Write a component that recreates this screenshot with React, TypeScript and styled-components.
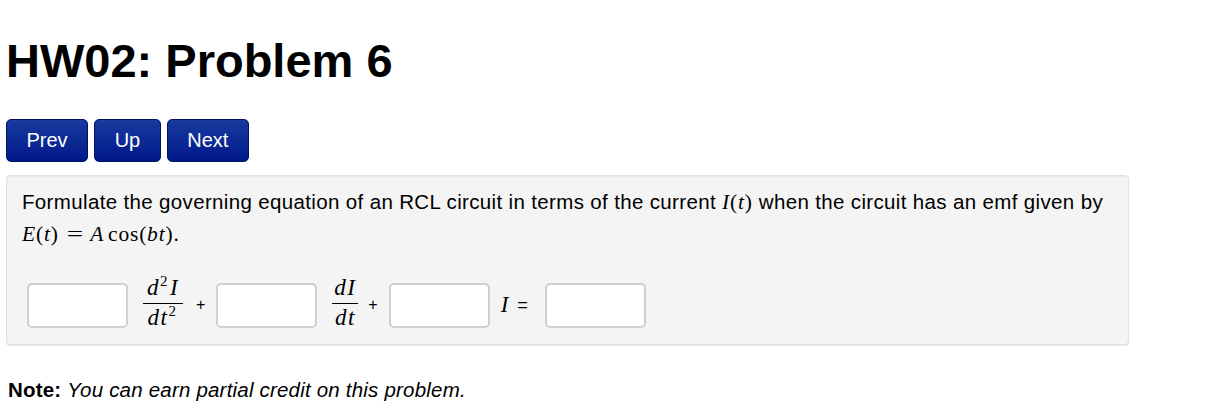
import React from 'react';
import styled, { createGlobalStyle } from 'styled-components';

const GlobalStyle = createGlobalStyle`
  body {
    margin: 0;
    background: #ffffff;
    font-family: "Liberation Sans", Arial, Helvetica, sans-serif;
    color: #000000;
  }
`;

const Page = styled.div`
  padding: 0 89px 0 6px;
`;

const Title = styled.h1`
  margin: 34px 0 0 0;
  font-size: 47px;
  font-weight: bold;
  line-height: 53px;
`;

const Nav = styled.div`
  display: flex;
  gap: 6px;
  margin-top: 32px;
`;

const NavButton = styled.button`
  height: 43px;
  padding: 0 19.5px;
  border: 1px solid #00135e;
  border-radius: 5px;
  background: linear-gradient(#193a9f, #00198a);
  color: #ffffff;
  font-family: "Liberation Sans", Arial, sans-serif;
  font-size: 20px;
  cursor: pointer;
`;

const Well = styled.div`
  margin-top: 13px;
  background: #f4f4f4;
  border: 1px solid #e2e2e2;
  border-radius: 4px;
  box-shadow: inset 0 1px 1px rgba(0, 0, 0, 0.05), 0 1px 0 #e6e6e6;
  padding: 10px 15px 9px 15px;
`;

const Text = styled.p`
  margin: 0;
  font-size: 20.5px;
  letter-spacing: 0.35px;
  line-height: 32px;
`;

const Mi = styled.span<{ $l?: number; $r?: number }>`
  font-family: "Liberation Serif", "Times New Roman", serif;
  font-size: 21.5px;
  font-style: italic;
  letter-spacing: 0.8px;
  margin: 0 ${({ $r = 0 }) => $r}px 0 ${({ $l = 0 }) => $l}px;
`;

const Mo = styled.span<{ $l?: number; $r?: number }>`
  font-family: "Liberation Serif", "Times New Roman", serif;
  font-size: 21.5px;
  font-style: normal;
  letter-spacing: 0.8px;
  margin: 0 ${({ $r = 0 }) => $r}px 0 ${({ $l = 0 }) => $l}px;
`;

const Eq = styled.span`
  display: inline-block;
  font-family: "Liberation Serif", "Times New Roman", serif;
  font-size: 21.5px;
  transform: scaleX(1.35);
  margin: 0 9px 0 10px;
`;

const Row = styled.div`
  display: flex;
  align-items: center;
  height: 60px;
  margin-top: 25px;
  padding-left: 5px;
`;

const Blank = styled.input<{ $l?: number }>`
  box-sizing: border-box;
  width: 101px;
  height: 45px;
  margin-left: ${({ $l = 0 }) => $l}px;
  border: 2px solid #cfcfcf;
  border-radius: 5px;
  background: #ffffff;
  outline: none;
`;

const Frac = styled.span<{ $w: number }>`
  display: inline-flex;
  flex-direction: column;
  align-items: stretch;
  width: ${({ $w }) => $w}px;
  margin: 0 0 5px 15px;
  font-family: "Liberation Serif", "Times New Roman", serif;
  font-style: italic;
  font-size: 23px;
  line-height: 26px;
  text-align: center;
`;

const Num = styled.span`
  display: block;
  padding-bottom: 2px;
  border-bottom: 1.5px solid #000;
  letter-spacing: 1.5px;
`;

const Den = styled.span`
  display: block;
  padding-top: 1px;
  letter-spacing: 1.5px;
`;

const Sup = styled.sup`
  font-style: normal;
  font-size: 15px;
  line-height: 0;
  vertical-align: 9px;
  margin-right: 1px;
`;

const Op = styled.span<{ $l: number; $size?: number }>`
  margin-left: ${({ $l }) => $l}px;
  font-size: ${({ $size = 16 }) => $size}px;
`;

const RowVar = styled.span`
  margin-left: 11px;
  font-family: "Liberation Serif", "Times New Roman", serif;
  font-style: italic;
  font-size: 23px;
`;

const Note = styled.p`
  margin: 33px 0 0 2px;
  font-size: 20.5px;
  letter-spacing: 0.2px;
`;

export default function App() {
  return (
    <Page>
      <GlobalStyle />
      <Title>HW02: Problem 6</Title>
      <Nav>
        <NavButton>Prev</NavButton>
        <NavButton>Up</NavButton>
        <NavButton>Next</NavButton>
      </Nav>
      <Well>
        <Text>
          Formulate the governing equation of an RCL circuit in terms of the current{' '}
          <Mi>I</Mi>
          <Mo>(</Mo>
          <Mi>t</Mi>
          <Mo>)</Mo> when the circuit has an emf given by
          <br />
          <Mi>E</Mi>
          <Mo>(</Mo>
          <Mi>t</Mi>
          <Mo>)</Mo>
          <Eq>=</Eq>
          <Mi $r={4}>A</Mi>
          <Mo>cos(</Mo>
          <Mi>bt</Mi>
          <Mo>).</Mo>
        </Text>
        <Row>
          <Blank />
          <Frac $w={40}>
            <Num>
              d<Sup>2</Sup>I
            </Num>
            <Den>
              dt<Sup>2</Sup>
            </Den>
          </Frac>
          <Op $l={13}>+</Op>
          <Blank $l={11} />
          <Frac $w={26}>
            <Num>dI</Num>
            <Den>dt</Den>
          </Frac>
          <Op $l={10}>+</Op>
          <Blank $l={11} />
          <RowVar>I</RowVar>
          <Op $l={9} $size={18}>=</Op>
          <Blank $l={17} />
        </Row>
      </Well>
      <Note>
        <b>Note:</b> <em>You can earn partial credit on this problem.</em>
      </Note>
    </Page>
  );
}
